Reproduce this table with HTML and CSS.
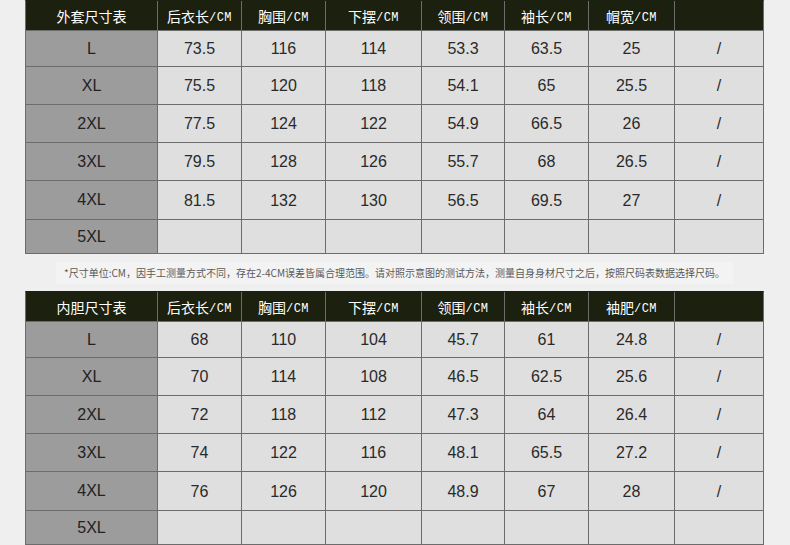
FILE: index.html
```html
<!DOCTYPE html>
<html lang="zh-CN">
<head>
<meta charset="utf-8">
<title>尺寸表</title>
<link rel="stylesheet" href="styles.css">
</head>
<body>
<div class="page">
  <div class="chart">
    <div class="hd first">外套尺寸表</div>
    <div class="hd">后衣长<span class="u">/CM</span></div>
    <div class="hd">胸围<span class="u">/CM</span></div>
    <div class="hd">下摆<span class="u">/CM</span></div>
    <div class="hd">领围<span class="u">/CM</span></div>
    <div class="hd">袖长<span class="u">/CM</span></div>
    <div class="hd">帽宽<span class="u">/CM</span></div>
    <div class="hd"></div>

    <div class="sz">L</div><div class="c">73.5</div><div class="c">116</div><div class="c">114</div><div class="c">53.3</div><div class="c">63.5</div><div class="c">25</div><div class="c">/</div>
    <div class="sz">XL</div><div class="c">75.5</div><div class="c">120</div><div class="c">118</div><div class="c">54.1</div><div class="c">65</div><div class="c">25.5</div><div class="c">/</div>
    <div class="sz">2XL</div><div class="c">77.5</div><div class="c">124</div><div class="c">122</div><div class="c">54.9</div><div class="c">66.5</div><div class="c">26</div><div class="c">/</div>
    <div class="sz">3XL</div><div class="c">79.5</div><div class="c">128</div><div class="c">126</div><div class="c">55.7</div><div class="c">68</div><div class="c">26.5</div><div class="c">/</div>
    <div class="sz">4XL</div><div class="c">81.5</div><div class="c">132</div><div class="c">130</div><div class="c">56.5</div><div class="c">69.5</div><div class="c">27</div><div class="c">/</div>
    <div class="sz">5XL</div><div class="c"></div><div class="c"></div><div class="c"></div><div class="c"></div><div class="c"></div><div class="c"></div><div class="c"></div>
  </div>

  <div class="note"><span class="note-box">*尺寸单位:CM，因手工测量方式不同，存在2-4CM误差皆属合理范围。请对照示意图的测试方法，测量自身身材尺寸之后，按照尺码表数据选择尺码。</span></div>

  <div class="chart">
    <div class="hd first">内胆尺寸表</div>
    <div class="hd">后衣长<span class="u">/CM</span></div>
    <div class="hd">胸围<span class="u">/CM</span></div>
    <div class="hd">下摆<span class="u">/CM</span></div>
    <div class="hd">领围<span class="u">/CM</span></div>
    <div class="hd">袖长<span class="u">/CM</span></div>
    <div class="hd">袖肥<span class="u">/CM</span></div>
    <div class="hd"></div>

    <div class="sz">L</div><div class="c">68</div><div class="c">110</div><div class="c">104</div><div class="c">45.7</div><div class="c">61</div><div class="c">24.8</div><div class="c">/</div>
    <div class="sz">XL</div><div class="c">70</div><div class="c">114</div><div class="c">108</div><div class="c">46.5</div><div class="c">62.5</div><div class="c">25.6</div><div class="c">/</div>
    <div class="sz">2XL</div><div class="c">72</div><div class="c">118</div><div class="c">112</div><div class="c">47.3</div><div class="c">64</div><div class="c">26.4</div><div class="c">/</div>
    <div class="sz">3XL</div><div class="c">74</div><div class="c">122</div><div class="c">116</div><div class="c">48.1</div><div class="c">65.5</div><div class="c">27.2</div><div class="c">/</div>
    <div class="sz">4XL</div><div class="c">76</div><div class="c">126</div><div class="c">120</div><div class="c">48.9</div><div class="c">67</div><div class="c">28</div><div class="c">/</div>
    <div class="sz">5XL</div><div class="c"></div><div class="c"></div><div class="c"></div><div class="c"></div><div class="c"></div><div class="c"></div><div class="c"></div>
  </div>
</div>
</body>
</html>
```

FILE: styles.css
```css
html, body {
  margin: 0;
  padding: 0;
  background: #efefef;
}

.page {
  padding-left: 25px;
  width: 739px;
}

.chart {
  display: grid;
  grid-template-columns: 131px 83px 83px 95px 82px 83px 85px 88px;
  grid-template-rows: 29px 35px 37px 37px 37px 38px 33px;
  gap: 1px;
  background: #6c6c6c;
  border: 1px solid #6c6c6c;
  border-top-color: #1b200f;
  width: 737px;
}

.hd {
  background: #1b200f;
  color: #ffffff;
  font-family: "Noto Sans CJK SC", "Liberation Sans", sans-serif;
  font-size: 14px;
  display: flex;
  align-items: center;
  justify-content: center;
  white-space: nowrap;
  line-height: 1;
}

.hd .u {
  font-family: "Liberation Mono", "DejaVu Sans Mono", monospace;
  font-size: 12px;
  letter-spacing: 0.5px;
  position: relative;
  top: 2px;
}

.sz {
  background: #9c9c9c;
  color: #222222;
  font-family: "Liberation Sans", Arial, sans-serif;
  font-size: 16px;
  display: flex;
  align-items: center;
  justify-content: center;
}

.c {
  background: #dfdfdf;
  color: #2a2a2a;
  font-family: "Liberation Sans", Arial, sans-serif;
  font-size: 16px;
  display: flex;
  align-items: center;
  justify-content: center;
  padding-top: 1px;
}

.note {
  height: 37px;
  display: flex;
  align-items: center;
  justify-content: center;
  width: 739px;
}

.note-box {
  font-family: "Noto Sans CJK SC", "Liberation Sans", sans-serif;
  font-size: 10px;
  color: #5a5a5a;
  background: #f3f3f3;
  padding: 6px 8px;
  white-space: nowrap;
  line-height: 1;
}
```
